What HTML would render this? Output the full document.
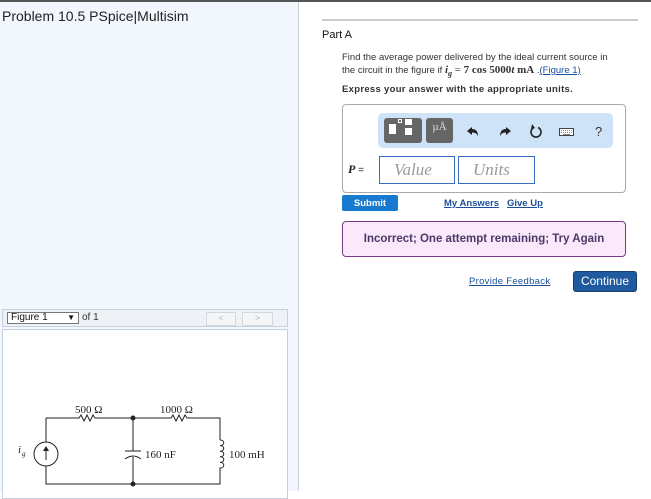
<!DOCTYPE html>
<html><head><style>
*{margin:0;padding:0;box-sizing:border-box}
body{width:651px;height:491px;overflow:hidden;background:#fff;font-family:"Liberation Sans",Arial,sans-serif;position:relative}
.a{position:absolute}
a{color:#1a4f9c}
</style></head><body>
<div class="a" style="left:0;top:0;width:651px;height:2px;background:#555"></div>
<div class="a" style="left:0;top:2px;width:299px;height:489px;background:#f2f7fd;border-right:1px solid #c8cfd8"></div>
<div class="a" style="left:2px;top:8px;font-size:14px;color:#222">Problem 10.5 PSpice|Multisim</div>

<div class="a" style="left:2px;top:309px;width:286px;height:18px;background:#eef1f5;border:1px solid #c5d0dc"></div>
<div class="a" style="left:7px;top:312px;width:72px;height:12px;background:#fff;border:1px solid #777;font-size:10px;line-height:10px;padding-left:3px;color:#111">Figure 1<span style="position:absolute;right:3px;font-size:8px">▼</span></div>
<div class="a" style="left:82px;top:312px;font-size:10px;color:#333">of 1</div>
<div class="a" style="left:206px;top:312px;width:30px;height:14px;border:1px solid #d5d9de;background:#f4f5f7;color:#bbb;font-size:9px;text-align:center">&lt;</div>
<div class="a" style="left:242px;top:312px;width:31px;height:14px;border:1px solid #d5d9de;background:#f4f5f7;color:#bbb;font-size:9px;text-align:center">&gt;</div>
<div class="a" style="left:2px;top:329px;width:286px;height:170px;background:#fff;border:1px solid #c5d0dc"></div>
<svg class="a" style="left:0;top:0" width="300" height="491">
<g stroke="#222" stroke-width="1" fill="none">
<path d="M46 418H79l2-3 3 6 3-6 3 6 3-6 2 3H171l2-3 3 6 3-6 3 6 3-6 2 3H220V440"/>
<path d="M220 440c5 0 5 5.6 0 5.6c5 0 5 5.6 0 5.6c5 0 5 5.6 0 5.6c5 0 5 5.6 0 5.6c5 0 5 5.6 0 5.6V484H46V466M46 442V418"/>
<circle cx="46" cy="454" r="12"/>
<path d="M133 418V451M133 457V484M125 451H141M125 459Q133 453 141 459"/>
<path d="M46 460V449"/>
</g>
<path d="M46 446l-3 5h6z" fill="#222"/>
<circle cx="133" cy="418" r="2.5" fill="#222"/><circle cx="133" cy="484" r="2.5" fill="#222"/>
<g font-family="Liberation Serif,serif" font-size="11" fill="#222">
<text x="75" y="413">500 Ω</text><text x="160" y="413">1000 Ω</text>
<text x="145" y="458">160 nF</text><text x="229" y="458">100 mH</text>
<text x="18" y="453" font-style="italic">i</text><text x="22" y="456" font-size="7" font-style="italic">g</text>
</g>
</svg>

<div class="a" style="left:322px;top:19px;width:316px;height:2px;background:#ccc"></div>
<div class="a" style="left:322px;top:29px;font-size:11px;color:#111">Part A</div>
<div class="a" style="left:342px;top:51px;font-size:9.5px;line-height:13px;color:#333;width:300px">Find the average power delivered by the ideal current source in<br>the circuit in the figure if <i style="font-family:'Liberation Serif',serif;font-size:11px;font-weight:bold">i<sub style="font-size:8px">g</sub></i> <span style="font-family:'Liberation Serif',serif;font-size:11px">= <b>7 cos 5000<i>t</i> mA</b></span> .<a href="#" style="font-size:9.5px">(Figure 1)</a></div>
<div class="a" style="left:342px;top:84px;font-size:9.5px;font-weight:bold;color:#333;letter-spacing:.3px">Express your answer with the appropriate units.</div>

<div class="a" style="left:342px;top:104px;width:284px;height:89px;border:1px solid #aaa;border-radius:4px;background:#fff"></div>
<div class="a" style="left:378px;top:113px;width:235px;height:35px;background:#cfe3f8;border-radius:5px"></div>
<div class="a" style="left:384px;top:118px;width:38px;height:25px;background:#666;border-radius:3px"></div>
<div class="a" style="left:389px;top:124px;width:7px;height:10px;background:#fff"></div>
<div class="a" style="left:398px;top:119px;width:4px;height:4px;border:1px solid #fff"></div>
<div class="a" style="left:405px;top:119px;width:7px;height:6px;background:#fff"></div>
<div class="a" style="left:405px;top:128px;width:7px;height:7px;background:#fff"></div>
<div class="a" style="left:426px;top:118px;width:27px;height:25px;background:#666;border-radius:3px;color:#ddd;font-family:'Liberation Serif',serif;font-size:11px;text-align:center;line-height:18px">µÅ</div>
<svg class="a" style="left:466px;top:120px" width="140" height="22">
<path d="M6 7l-5 4 5 4v-2.5c3 0 5 1 6 4 0-5-2-7.5-6-7.5z" fill="#222"/>
<path d="M40 7l5 4-5 4v-2.5c-3 0-5 1-6 4 0-5 2-7.5 6-7.5z" fill="#222"/>
<path d="M68 7.5a5 5 0 1 0 4 0" stroke="#222" stroke-width="1.6" fill="none"/>
<path d="M66 4l3 4-4 1z" fill="#222"/>
<rect x="93.5" y="8.5" width="14" height="7" stroke="#444" fill="#fff"/>
<path d="M95 10.5h11M95 12.5h11" stroke="#888" stroke-dasharray="1 1"/>
<path d="M97 14.5h7" stroke="#888"/>
</svg>
<div class="a" style="left:595px;top:124px;font-size:13px;color:#333">?</div>
<div class="a" style="left:348px;top:162px;font-family:'Liberation Serif',serif;font-size:12px;font-style:italic;font-weight:bold;color:#222">P<span style="font-style:normal;font-weight:normal;font-family:'Liberation Sans';font-size:10px"> =</span></div>
<div class="a" style="left:379px;top:156px;width:76px;height:28px;border:1px solid #3a6cc0;font-family:'Liberation Serif',serif;font-style:italic;font-size:17px;color:#999;line-height:26px;padding-left:14px">Value</div>
<div class="a" style="left:458px;top:156px;width:77px;height:28px;border:1px solid #3a6cc0;font-family:'Liberation Serif',serif;font-style:italic;font-size:17px;color:#999;line-height:26px;padding-left:14px">Units</div>

<div class="a" style="left:342px;top:195px;width:56px;height:16px;background:#1779cf;border-radius:2px;color:#fff;font-size:9.5px;font-weight:bold;text-align:center;line-height:17px">Submit</div>
<a class="a" href="#" style="left:444px;top:198px;font-size:9.5px;font-weight:bold">My Answers</a>
<a class="a" href="#" style="left:507px;top:198px;font-size:9.5px;font-weight:bold">Give Up</a>

<div class="a" style="left:342px;top:221px;width:284px;height:36px;background:#fbe8fb;border:1px solid #7a3a8a;border-radius:4px;color:#4a3a6a;font-size:11.5px;font-weight:bold;text-align:center;line-height:34px">Incorrect; One attempt remaining; Try Again</div>
<a class="a" href="#" style="left:469px;top:276px;font-size:9.5px;letter-spacing:.3px">Provide Feedback</a>
<div class="a" style="left:573px;top:271px;width:64px;height:21px;background:#1f5a9e;border:1px solid #173f70;border-radius:3px;color:#fff;font-size:12px;text-align:center;line-height:19px">Continue</div>
</body></html>
